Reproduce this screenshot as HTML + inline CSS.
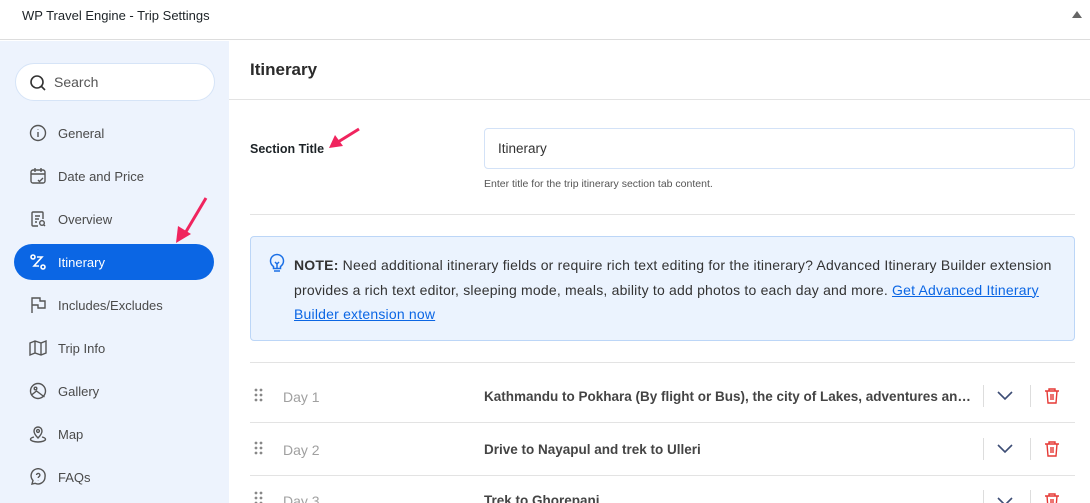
<!DOCTYPE html>
<html><head><style>
*{box-sizing:border-box;margin:0;padding:0}
html,body{width:1090px;height:503px;overflow:hidden}
body{background:#fff;font-family:"Liberation Sans",sans-serif;position:relative;color:#1e1e1e}
.abs{position:absolute}
.hdr{left:0;top:0;width:1090px;height:40px;border-bottom:1px solid #ddd;background:#fff}
.hdr span{position:absolute;left:22px;top:8px;font-size:13px;color:#1d2327}
.side{left:0;top:41px;width:229px;height:462px;background:#edf3fd}
.search{left:15px;top:63px;width:200px;height:38px;border:1px solid #d6e4f7;border-radius:19px;background:#fff}
.search span{position:absolute;left:38px;top:10px;font-size:14px;color:#555}
.item{left:14px;width:200px;height:36px;border-radius:18px;font-size:13px;color:#4a4a4a}
.item span{position:absolute;left:44px;top:11px}
.item svg{position:absolute;left:15px;top:9px}
.act{background:#0b66e4;color:#fff}
.line{height:1px;background:#e3e3e3}
.day{left:283px;font-size:14px;color:#a0a0a0}
.ttl{left:484px;font-size:13.5px;font-weight:bold;color:#444;width:488px;white-space:nowrap;overflow:hidden;text-overflow:ellipsis}
.sep{width:1px;height:22px;background:#ddd}
</style></head><body>
<div class="abs hdr"><span>WP Travel Engine - Trip Settings</span><div class="abs" style="left:1072px;top:11px;width:0;height:0;border-left:5px solid transparent;border-right:5px solid transparent;border-bottom:7px solid #666"></div></div>
<div class="abs side"></div>
<div class="abs search"><svg class="abs" style="left:13px;top:10px" width="18" height="18" viewBox="0 0 18 18" fill="none" stroke="#333" stroke-width="1.6"><circle cx="8" cy="8" r="6"/><path d="M12.5 12.5L16 16"/></svg><span>Search</span></div>

<div class="abs item" style="top:115px"><svg width="18" height="18" viewBox="0 0 18 18" fill="none" stroke="#555" stroke-width="1.4"><circle cx="9" cy="9" r="7.5"/><path d="M9 8v5M9 5.5v.5"/></svg><span>General</span></div>
<div class="abs item" style="top:158px"><svg width="18" height="18" viewBox="0 0 18 18" fill="none" stroke="#555" stroke-width="1.4"><rect x="2" y="3" width="14" height="13" rx="2"/><path d="M2 7h14M6 1v4M12 1v4M9 13l1.5 1.5L14 11"/></svg><span>Date and Price</span></div>
<div class="abs item" style="top:201px"><svg width="18" height="18" viewBox="0 0 18 18" fill="none" stroke="#555" stroke-width="1.4"><path d="M9 16H4a1 1 0 01-1-1V3a1 1 0 011-1h9a1 1 0 011 1v6M6 6h5M6 9h4M6 12h2"/><circle cx="13" cy="13" r="2.3"/><path d="M14.7 14.7L16 16"/></svg><span>Overview</span></div>
<div class="abs item act" style="top:244px"><svg width="18" height="18" viewBox="0 0 18 18" fill="none" stroke="#fff" stroke-width="1.6"><circle cx="4" cy="4" r="2"/><circle cx="14" cy="14" r="2"/><path d="M8 4h5l-8 9h5"/></svg><span style="color:#fff">Itinerary</span></div>
<div class="abs item" style="top:287px"><svg width="18" height="18" viewBox="0 0 18 18" fill="none" stroke="#555" stroke-width="1.4"><path d="M3 17V2h8v3h5v7H9v-3H3"/></svg><span>Includes/Excludes</span></div>
<div class="abs item" style="top:330px"><svg width="18" height="18" viewBox="0 0 18 18" fill="none" stroke="#555" stroke-width="1.4"><path d="M1 4l5-2 6 2 5-2v12l-5 2-6-2-5 2zM6 2v12M12 4v12"/></svg><span>Trip Info</span></div>
<div class="abs item" style="top:373px"><svg width="18" height="18" viewBox="0 0 18 18" fill="none" stroke="#555" stroke-width="1.4"><circle cx="9" cy="9" r="7.5"/><circle cx="6.5" cy="6.5" r="1.3"/><path d="M2.5 13l5-4 8 6"/></svg><span>Gallery</span></div>
<div class="abs item" style="top:416px"><svg width="18" height="18" viewBox="0 0 18 18" fill="none" stroke="#555" stroke-width="1.4"><path d="M9 13s-4-4-4-7a4 4 0 018 0c0 3-4 7-4 7z"/><circle cx="9" cy="6" r="1.4"/><path d="M5 12c-2.5.6-3.5 1.5-3.5 2.3C1.5 15.8 5 17 9 17s7.5-1.2 7.5-2.7c0-.8-1-1.7-3.5-2.3"/></svg><span>Map</span></div>
<div class="abs item" style="top:459px"><svg width="18" height="18" viewBox="0 0 18 18" fill="none" stroke="#555" stroke-width="1.4"><path d="M3 16l1-3.5A7 7 0 1116 9a7 7 0 01-10 6.3z"/><path d="M7.5 7a1.7 1.7 0 113 1.2c-.8.6-1.3.8-1.3 1.8M9.2 12v.3"/></svg><span>FAQs</span></div>

<div class="abs" style="left:250px;top:60px;font-size:17px;font-weight:bold;color:#2b2b2b">Itinerary</div>
<div class="abs line" style="left:229px;top:99px;width:861px"></div>
<div class="abs" style="left:250px;top:142px;font-size:12.5px;font-weight:bold;color:#1d2327">Section Title</div>
<div class="abs" style="left:484px;top:128px;width:591px;height:41px;border:1px solid #d3e2f7;border-radius:4px;font-size:13.5px;padding:12px 13px;color:#333">Itinerary</div>
<div class="abs" style="left:484px;top:178px;font-size:10.5px;color:#555">Enter title for the trip itinerary section tab content.</div>
<div class="abs line" style="left:250px;top:214px;width:825px"></div>

<div class="abs" style="left:250px;top:236px;width:825px;height:105px;background:#ebf3fe;border:1px solid #bcd6f7;border-radius:4px"></div>
<svg class="abs" style="left:268px;top:253px" width="18" height="20" viewBox="0 0 18 20" fill="none" stroke="#1a6fe6" stroke-width="1.5"><path d="M5.5 13.5C3.5 12 2.5 10 2.5 8a6.5 6.5 0 0113 0c0 2-1 4-3 5.5v2h-7z"/><path d="M6 18h6M7 9l2 2 2-2M9 11v4"/></svg>
<div class="abs" style="left:294px;top:253px;width:780px;font-size:14px;letter-spacing:0.2px;line-height:24.5px;color:#333;white-space:nowrap"><b>NOTE:</b> Need additional itinerary fields or require rich text editing for the itinerary? Advanced Itinerary Builder extension<br>provides a rich text editor, sleeping mode, meals, ability to add photos to each day and more. <a style="color:#0b66e4;text-decoration:underline">Get Advanced Itinerary</a><br><a style="color:#0b66e4;text-decoration:underline">Builder extension now</a></div>

<div class="abs line" style="left:250px;top:362px;width:825px"></div>
<div class="abs line" style="left:250px;top:422px;width:825px"></div>
<div class="abs line" style="left:250px;top:475px;width:825px"></div>

<svg width="0" height="0" style="position:absolute"><defs>
<g id="dots" fill="#888"><circle cx="2" cy="2" r="1.4"/><circle cx="7" cy="2" r="1.4"/><circle cx="2" cy="7" r="1.4"/><circle cx="7" cy="7" r="1.4"/><circle cx="2" cy="12" r="1.4"/><circle cx="7" cy="12" r="1.4"/></g>
<g id="chev" fill="none" stroke="#3d4d75" stroke-width="1.6"><path d="M1 1l7 7 7-7"/></g>
<g id="trash" fill="none" stroke="#e53935" stroke-width="1.4"><path d="M1 4h14M5 4V2h6v2M3 4l1 12h8l1-12M7 7v6M9 7v6"/></g>
</defs></svg>

<svg class="abs" style="left:254px;top:388px" width="10" height="14"><use href="#dots"/></svg>
<div class="abs day" style="top:389px">Day 1</div>
<div class="abs ttl" style="top:389px">Kathmandu to Pokhara (By flight or Bus), the city of Lakes, adventures and more</div>
<div class="abs sep" style="left:983px;top:385px"></div>
<svg class="abs" style="left:997px;top:391px" width="16" height="10"><use href="#chev"/></svg>
<div class="abs sep" style="left:1030px;top:385px"></div>
<svg class="abs" style="left:1044px;top:387px" width="16" height="18"><use href="#trash"/></svg>

<svg class="abs" style="left:254px;top:441px" width="10" height="14"><use href="#dots"/></svg>
<div class="abs day" style="top:442px">Day 2</div>
<div class="abs ttl" style="top:442px">Drive to Nayapul and trek to Ulleri</div>
<div class="abs sep" style="left:983px;top:438px"></div>
<svg class="abs" style="left:997px;top:444px" width="16" height="10"><use href="#chev"/></svg>
<div class="abs sep" style="left:1030px;top:438px"></div>
<svg class="abs" style="left:1044px;top:440px" width="16" height="18"><use href="#trash"/></svg>

<svg class="abs" style="left:254px;top:491px" width="10" height="14"><use href="#dots"/></svg>
<div class="abs day" style="top:493px">Day 3</div>
<div class="abs ttl" style="top:493px">Trek to Ghorepani</div>
<div class="abs sep" style="left:983px;top:490px"></div>
<svg class="abs" style="left:997px;top:497px" width="16" height="10"><use href="#chev"/></svg>
<div class="abs sep" style="left:1030px;top:490px"></div>
<svg class="abs" style="left:1044px;top:492px" width="16" height="18"><use href="#trash"/></svg>

<svg class="abs" style="left:170px;top:195px" width="40" height="52"><path d="M36 3L14 40" stroke="#f0245e" stroke-width="3"/><path d="M6 48l2-17 13 8z" fill="#f0245e"/></svg>
<svg class="abs" style="left:326px;top:126px" width="36" height="26"><path d="M33 3L12 16" stroke="#f0245e" stroke-width="3"/><path d="M3 22l6-13 8 11z" fill="#f0245e"/></svg>
</body></html>
